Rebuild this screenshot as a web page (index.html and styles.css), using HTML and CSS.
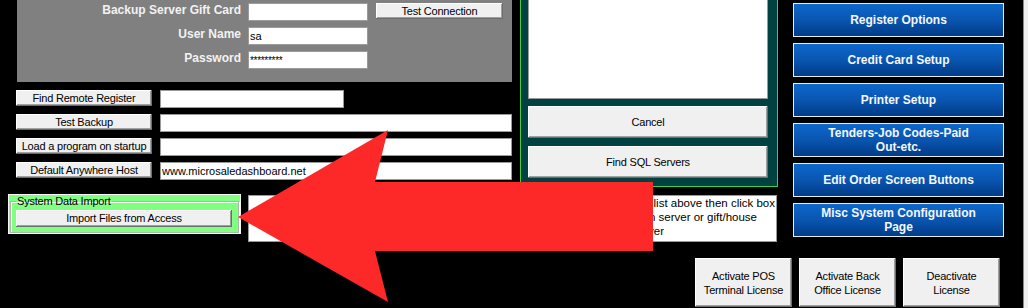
FILE: index.html
```html
<!DOCTYPE html>
<html lang="en">
<head>
    <meta charset="UTF-8">
    <meta name="viewport" content="width=device-width, initial-scale=1.0">
    <title>System Setup</title>
    <link rel="stylesheet" href="styles.css">
</head>
<body>

    <div class="screen">
        <div class="content">
            <div class="upper">
                <div class="main">
                    <div class="top">
                        <div class="left">
                            <!-- backup server settings -->
                            <div class="gray-panel">
                                <label class="field-label">Backup Server Gift Card</label>
                                <input class="field" type="text" value="">
                                <button class="btn btn-small">Test Connection</button>

                                <label class="field-label">User Name</label>
                                <input class="field" type="text" value="sa">
                                <span></span>

                                <label class="field-label">Password</label>
                                <input class="field field-pass" type="text" value="*********">
                                <span></span>
                            </div>

                            <div class="rows">
                                <div class="row">
                                    <button class="btn btn-row">Find Remote Register</button>
                                    <input class="field field-short" type="text" value="">
                                </div>
                                <div class="row">
                                    <button class="btn btn-row">Test Backup</button>
                                    <input class="field field-long" type="text" value="">
                                </div>
                                <div class="row">
                                    <button class="btn btn-row">Load a program on startup</button>
                                    <input class="field field-long" type="text" value="">
                                </div>
                                <div class="row">
                                    <button class="btn btn-row">Default Anywhere Host</button>
                                    <input class="field field-long" type="text" value="www.microsaledashboard.net">
                                </div>
                            </div>
                        </div>

                        <!-- sql server list -->
                        <div class="server-panel">
                            <div class="server-list"></div>
                            <button class="btn btn-wide">Cancel</button>
                            <button class="btn btn-wide">Find SQL Servers</button>
                        </div>
                    </div>

                    <div class="import-row">
                        <div class="import-box">
                            <fieldset>
                                <legend>System Data Import</legend>
                                <button class="btn btn-import">Import Files from Access</button>
                            </fieldset>
                        </div>
                        <div class="info-box">
                            <div class="info-line l1">Select a server from the list above then click box</div>
                            <div class="info-line l2">to set it as the main server or gift/house</div>
                            <div class="info-line l3">card server</div>
                        </div>
                    </div>
                </div>

                <!-- setup menu -->
                <div class="side">
                    <button class="nav-btn">Register Options</button>
                    <button class="nav-btn">Credit Card Setup</button>
                    <button class="nav-btn">Printer Setup</button>
                    <button class="nav-btn">Tenders-Job Codes-Paid<br>Out-etc.</button>
                    <button class="nav-btn">Edit Order Screen Buttons</button>
                    <button class="nav-btn">Misc System Configuration<br>Page</button>
                </div>
            </div>

            <div class="licenses">
                <button class="btn btn-license">Activate POS<br>Terminal License</button>
                <button class="btn btn-license">Activate Back<br>Office License</button>
                <button class="btn btn-license">Deactivate<br>License</button>
            </div>
        </div>
        <div class="edge"></div>
    </div>

    <svg class="arrow" width="1028" height="308" viewBox="0 0 1028 308">
        <polygon points="238,217 388,130 375,182 653,182 653,251 375,251 388,302" fill="#fd2828"/>
    </svg>

</body>
</html>
```

FILE: styles.css
```css
body {
    margin: 0;
    padding: 0;
    background-color: #000;
    font-family: "Liberation Sans", Arial, sans-serif;
    font-size: 11px;
    color: #000;
    width: 1028px;
    height: 308px;
    overflow: hidden;
    position: relative;
}
.screen {
    display: flex;
    height: 308px;
}
.content {
    width: 1023px;
    display: flex;
    flex-direction: column;
}
.upper {
    display: flex;
    height: 242px;
}
.main {
    width: 778px;
    display: flex;
    flex-direction: column;
}
.top {
    display: flex;
    height: 187px;
}
.left {
    width: 512px;
}

/* gray backup panel */
.gray-panel {
    margin-left: 17px;
    width: 495px;
    height: 82px;
    box-sizing: border-box;
    padding-top: 3px;
    background-color: #808080;
    display: grid;
    grid-template-columns: 224px 120px 128px;
    grid-auto-rows: 18px;
    column-gap: 7px;
    row-gap: 6px;
}
.field-label {
    font-size: 12px;
    font-weight: bold;
    color: #f2f2f2;
    text-align: right;
    line-height: 14px;
}
.field {
    box-sizing: border-box;
    height: 18px;
    margin: 0;
    padding: 0 1px;
    border: 1px solid #9a9a9a;
    background-color: #fff;
    font-family: "Liberation Sans", Arial, sans-serif;
    font-size: 11px;
    color: #000;
    outline: none;
}
.field-pass {
    font-size: 10px;
    letter-spacing: -0.3px;
}
.field-short {
    width: 184px;
}
.field-long {
    width: 352px;
}

/* classic buttons */
.btn {
    box-sizing: border-box;
    margin: 0;
    padding: 0;
    border: none;
    background-color: #f0f0f0;
    box-shadow: inset -1px -1px #6d6d6d, inset 1px 1px #ffffff, inset -2px -2px #a0a0a0;
    font-family: "Liberation Sans", Arial, sans-serif;
    font-size: 11px;
    letter-spacing: -0.2px;
    color: #000;
    line-height: 13px;
    cursor: pointer;
}
.btn-small {
    height: 16px;
    margin-left: 1px;
}
.rows {
    margin-top: 8px;
    padding-left: 16px;
}
.row {
    display: flex;
    gap: 8px;
    height: 18px;
    margin-bottom: 6px;
}
.btn-row {
    width: 136px;
    height: 16px;
}

/* server list panel */
.server-panel {
    margin-left: 8px;
    width: 258px;
    height: 187px;
    box-sizing: border-box;
    background-color: #004242;
    border: 1px solid #3fcf3f;
    border-top: none;
    padding: 0 9px 0 7px;
}
.server-list {
    height: 99px;
    box-sizing: border-box;
    background-color: #fff;
    border: 1px solid #9a9a9a;
    border-top: none;
}
.btn-wide {
    display: block;
    width: 240px;
    height: 32px;
    margin-top: 7px;
}
.btn-wide + .btn-wide {
    margin-top: 8px;
}

/* import row */
.import-row {
    display: flex;
    margin-top: 7px;
}
.import-box {
    margin-left: 8px;
    width: 233px;
    height: 40px;
    box-sizing: border-box;
    background-color: #80ff80;
    border: 1px solid #f4f4f4;
    padding: 0 1px;
}
.import-box fieldset {
    margin: 0;
    padding: 0 6px 0 5px;
    height: 38px;
    box-sizing: border-box;
    border: 1px solid #a9b9a9;
    box-shadow: 1px 1px #f4fff4, inset 1px 1px #f4fff4;
}
.import-box legend {
    padding: 0 1px;
    margin-left: 0;
    font-size: 11px;
    line-height: 13px;
    letter-spacing: -0.2px;
}
.btn-import {
    display: block;
    width: 216px;
    height: 17px;
    margin-top: 2px;
}
.info-box {
    margin-left: 7px;
    margin-top: 1px;
    width: 529px;
    height: 47px;
    box-sizing: border-box;
    background-color: #fff;
    border: 1px solid #9a9a9a;
    font-size: 11.5px;
    line-height: 14px;
}
.info-line {
    white-space: nowrap;
    overflow: hidden;
    text-align: right;
}
.l1 { width: 526px; }
.l2 { width: 508px; }
.l3 { width: 415px; }

/* blue menu buttons */
.side {
    margin-left: 15px;
    width: 211px;
    padding-top: 3px;
    display: flex;
    flex-direction: column;
    gap: 6px;
}
.nav-btn {
    height: 34px;
    margin: 0;
    padding: 0;
    box-sizing: border-box;
    border: 1px solid #e4ebf2;
    background: linear-gradient(#0c68cc, #0a55b0 50%, #003b88);
    color: #f4f7fb;
    font-family: "Liberation Sans", Arial, sans-serif;
    font-size: 12px;
    font-weight: bold;
    line-height: 14px;
    cursor: pointer;
}

/* license buttons */
.licenses {
    display: flex;
    justify-content: flex-end;
    gap: 7px;
    margin-top: 16px;
    padding-right: 22px;
}
.btn-license {
    width: 97px;
    height: 49px;
    line-height: 14px;
}

.edge {
    width: 4px;
    margin-left: 1px;
    background-color: #f0f0f0;
    border-left: 1px solid #8a8a8a;
}
.arrow {
    position: absolute;
    left: 0;
    top: 0;
    pointer-events: none;
}
```
